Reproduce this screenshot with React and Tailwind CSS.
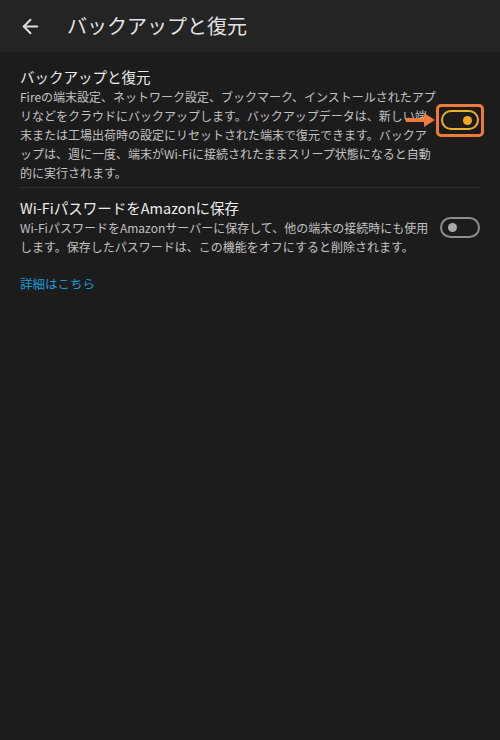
import React from "react";
import { ArrowLeft } from "lucide-react";

const font = { fontFamily: '"Noto Sans CJK JP", "Noto Sans", sans-serif' };

const Toggle = ({ on }) =>
  on ? (
    <div className="h-[20px] w-[38px] rounded-full border-2 border-[#e9b12c] flex items-center justify-end pr-[5px]">
      <div className="h-[9px] w-[9px] rounded-full bg-[#f6a61e]" />
    </div>
  ) : (
    <div className="h-[21px] w-[40px] rounded-full border-2 border-[#8f8f8f] flex items-center pl-[6px]">
      <div className="h-[9px] w-[9px] rounded-full bg-[#a9a9a9]" />
    </div>
  );

export default function App() {
  return (
    <div className="w-[500px] h-[740px] bg-[#1c1c1c] text-[#e6e6e6] flex flex-col" style={font}>
      {/* Header */}
      <header className="h-[52px] bg-[#242424] flex items-center px-[19px] shrink-0">
        <ArrowLeft className="h-[23px] w-[23px] text-[#e0e0e0]" strokeWidth={2} />
        <h1 className="ml-[25px] text-[20px] text-[#e3e3e3] leading-none">バックアップと復元</h1>
      </header>

      <main className="px-[20px] pt-[15px]">
        {/* Backup */}
        <section className="flex items-center pb-[5px] border-b border-[#2e2e2e]">
          <div className="flex-1">
            <div className="text-[14.5px] leading-[20px] text-[#ececec]">バックアップと復元</div>
            <p className="text-[12px] leading-[19px] text-[#c2c2c2] whitespace-nowrap">
              Fireの端末設定、ネットワーク設定、ブックマーク、インストールされたアプ<br />
              リなどをクラウドにバックアップします。バックアップデータは、新しい端<br />
              末または工場出荷時の設定にリセットされた端末で復元できます。バックア<br />
              ップは、週に一度、端末がWi-Fiに接続されたままスリープ状態になると自動<br />
              的に実行されます。
            </p>
          </div>
          <div className="relative -mr-[4px] mb-[9px]">
            {/* annotation arrow */}
            <svg className="absolute -left-[30px] top-[9px]" width="30" height="14" viewBox="0 0 30 14">
              <rect x="0" y="5" width="20" height="4" fill="#ee7a3a" />
              <polygon points="18,0 29,7 18,14" fill="#ee7a3a" />
            </svg>
            <div className="h-[33px] w-[48px] rounded-[5px] border-[3px] border-[#ee7a3a] flex items-center justify-center">
              <Toggle on />
            </div>
          </div>
        </section>

        {/* Wi-Fi */}
        <section className="flex items-center pt-[10px]">
          <div className="flex-1">
            <div className="text-[14.5px] leading-[20px] text-[#ececec]">Wi-FiパスワードをAmazonに保存</div>
            <p className="text-[12px] leading-[19px] text-[#c2c2c2] whitespace-nowrap">
              Wi-FiパスワードをAmazonサーバーに保存して、他の端末の接続時にも使用<br />
              します。保存したパスワードは、この機能をオフにすると削除されます。
            </p>
          </div>
          <Toggle />
        </section>

        <a className="block mt-[19px] text-[12.5px] leading-[18px] text-[#1d9ad6]">詳細はこちら</a>
      </main>
    </div>
  );
}
